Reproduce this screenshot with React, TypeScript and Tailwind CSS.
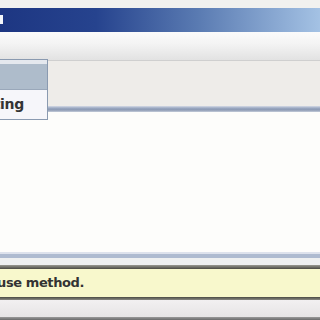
import React from "react";

export default function App() {
  return (
    <div className="relative w-[320px] h-[320px] overflow-hidden flex flex-col bg-[#fdfdfb]" style={{ fontFamily: '"DejaVu Sans", Verdana, sans-serif' }}>
      <div className="h-[8px] bg-[#f1f1ef] shrink-0" />
      <div className="h-[24px] shrink-0 bg-[linear-gradient(90deg,#1d3682_0%,#26438e_30%,#5a7bb2_62%,#a4c2e4_100%)] pt-[7px]">
        <div className="w-[3px] h-[9px] bg-[#f4f6fa]" />
      </div>
      <div className="h-[28px] shrink-0 bg-[linear-gradient(180deg,#fbfbfb_0%,#f4f4f4_40%,#e2e2e2_100%)]" />
      <div className="h-px shrink-0 bg-[#cfcfcf]" />
      <div className="h-[45px] shrink-0 bg-[#eeece9]" />
      <div className="h-[6px] shrink-0 bg-[linear-gradient(180deg,#d6dbe6_0%,#9aa8c2_35%,#8b99b2_65%,#c4ccda_100%)]" />
      <div className="h-[140px] shrink-0 bg-[#fdfdfb]" />
      <div className="h-[2px] shrink-0 bg-[#dde2ec]" />
      <div className="h-[4px] shrink-0 bg-[#aebbd0]" />
      <div className="h-[7px] shrink-0 bg-[#eef0f0]" />
      <div className="h-[4px] shrink-0 bg-[linear-gradient(180deg,#9a9a92_0%,#4a4a42_100%)]" />
      <div className="h-[28px] shrink-0 bg-[#f8f8cc] flex items-center">
        <div className="w-[84px] flex justify-end">
          <span className="whitespace-nowrap text-[13px] font-bold text-[#333333] tracking-[-0.4px]">Please use method.</span>
        </div>
      </div>
      <div className="h-[3px] shrink-0 bg-[linear-gradient(180deg,#4a4a42_0%,#8a8a84_100%)]" />
      <div className="h-[17px] shrink-0 bg-[linear-gradient(180deg,#f2f0f1_0%,#e6e4e5_100%)]" />
      <div className="flex-1 bg-[linear-gradient(180deg,#9a9a9a_0%,#6a6a6a_100%)]" />

      <div className="absolute top-[59px] left-[-60px] w-[108px] border border-[#8a9ab0] bg-[#f6f6fa] flex flex-col">
        <div className="h-[4px] bg-[#e4e8ee]" />
        <div className="h-[25px] bg-[#aebccb]" />
        <div className="h-px bg-[#9aa8ba]" />
        <div className="h-[29px] flex items-center justify-end pr-[23px]">
          <span className="whitespace-nowrap text-[14px] font-bold text-[#333333] tracking-[-0.3px]">Testing</span>
        </div>
      </div>
    </div>
  );
}
